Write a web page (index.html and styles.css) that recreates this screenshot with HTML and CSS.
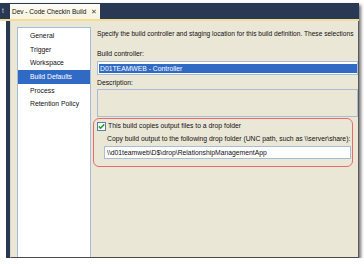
FILE: index.html
```html
<!DOCTYPE html>
<html lang="en">
<head>
  <meta charset="UTF-8" />
  <title>Dev - Code Checkin Build</title>
  <link rel="stylesheet" href="styles.css">
</head>
<body>

  <div class="window">
    <!-- tab strip -->
    <div class="tabstrip">
      <span class="prev-tab">t</span>
      <div class="tab">
        <span class="tab-title">Dev - Code Checkin Build</span>
        <span class="tab-close">&#x2715;</span>
      </div>
    </div>

    <div class="frame">
      <div class="doc">
        <ul class="nav">
          <li>General</li>
          <li>Trigger</li>
          <li>Workspace</li>
          <li class="selected">Build Defaults</li>
          <li>Process</li>
          <li>Retention Policy</li>
        </ul>

        <div class="page">
          <p class="intro">Specify the build controller and staging location for this build definition. These selections</p>

          <label class="field-label">Build controller:</label>
          <div class="combo"><span class="combo-value">D01TEAMWEB - Controller</span></div>

          <label class="field-label desc-label">Description:</label>
          <div class="description"></div>

          <div class="drop-box">
            <label class="check-row">
              <span class="checkbox">
                <svg width="7" height="7" viewBox="0 0 7 7"><path d="M0.8 3.4 L2.6 5.2 L6.2 1.4" fill="none" stroke="#21a121" stroke-width="1.6"/></svg>
              </span>
              This build copies output files to a drop folder
            </label>
            <div class="drop-label">Copy build output to the following drop folder (UNC path, such as \\server\share):</div>
            <div class="drop-input">\\d01teamweb\D$\drop\RelationshipManagementApp</div>
          </div>
        </div>
      </div>
    </div>
  </div>

</body>
</html>
```

FILE: styles.css
```css
body {
  margin: 0;
  background: #ffffff;
  font-family: "Liberation Sans", Arial, sans-serif;
  font-size: 6.8px;
  line-height: 8px;
  color: #111111;
}

.window {
  margin: 3px 0 0 0;
  width: 359px;
  height: 255px;
  background: #293955;
  display: flex;
  flex-direction: column;
  box-shadow: 2px 2px 3px rgb(0 0 0 / 0.55);
}

.tabstrip {
  height: 16px;
  display: flex;
  align-items: flex-end;
  border-bottom: 2px solid #f3dd96;
}

.prev-tab {
  width: 10px;
  color: #c9d1de;
  font-size: 6.5px;
  align-self: center;
  padding-left: 2px;
  box-sizing: border-box;
}

.tab {
  width: 90px;
  height: 15px;
  box-sizing: border-box;
  background: linear-gradient(#fdfcf4, #f8f3df);
  display: flex;
  align-items: center;
  justify-content: space-between;
  padding: 0 3px 0 2px;
  font-size: 6.5px;
}

.tab-close {
  font-size: 6.5px;
  color: #444;
}

.frame {
  flex: 1;
  display: flex;
  border-left: 6px solid #ffffff;
  padding-left: 4px;
  min-height: 0;
}

.doc {
  flex: 1;
  display: flex;
  background: #ebe7d7;
  padding: 6px 0 0 6px;
  border-left: 1px solid #d9d5c3;
  border-right: 1px solid #5a5a5a;
  border-bottom: 1px solid #4a4a4a;
  min-width: 0;
}

.nav {
  list-style: none;
  margin: 0;
  padding: 1px 0 0 0;
  width: 72px;
  background: #ffffff;
  border-left: 1px solid #a9bcd6;
  border-right: 1px solid #a9bcd6;
  border-top: 1px solid #a9bcd6;
}

.nav li {
  height: 13.7px;
  line-height: 13.7px;
  padding-left: 12px;
}

.nav li.selected {
  background: #316ac5;
  color: #ffffff;
}

.page {
  flex: 1;
  padding: 0 0 0 6px;
  min-width: 0;
  overflow: hidden;
}

.intro {
  margin: 3px 0 0 0;
  font-size: 6.6px;
  white-space: nowrap;
}

.field-label {
  display: block;
  margin-top: 12px;
}

.combo {
  margin-top: 3px;
  height: 14px;
  border: 1px solid #a9bcd6;
  background: #ffffff;
  padding: 2px 0 1px 1px;
  box-sizing: border-box;
}

.combo-value {
  display: block;
  height: 100%;
  background: #316ac5;
  color: #ffffff;
  line-height: 9px;
  padding-left: 1px;
}

.desc-label {
  margin-top: 4px;
}

.description {
  margin-top: 2px;
  height: 28px;
  box-sizing: border-box;
  border: 1px solid #a9bcd6;
}

.drop-box {
  margin: 1px 5px 0 -4px;
  height: 49px;
  box-sizing: border-box;
  border: 1.5px solid #ee6868;
  border-radius: 6px;
  padding: 2.5px 0 0 3px;
}

.check-row {
  display: flex;
  align-items: center;
  gap: 2px;
  height: 9px;
}

.checkbox {
  width: 9px;
  height: 9px;
  box-sizing: border-box;
  border: 1px solid #5f7fa8;
  background: #ffffff;
  display: flex;
  align-items: center;
  justify-content: center;
}

.drop-label {
  margin: 4px 0 0 10px;
  white-space: nowrap;
}

.drop-input {
  margin: 3px 1px 0 7px;
  height: 13px;
  line-height: 11px;
  box-sizing: border-box;
  border: 1px solid #a9bcd6;
  background: #ffffff;
  padding-left: 2px;
  white-space: nowrap;
  overflow: hidden;
}
```
